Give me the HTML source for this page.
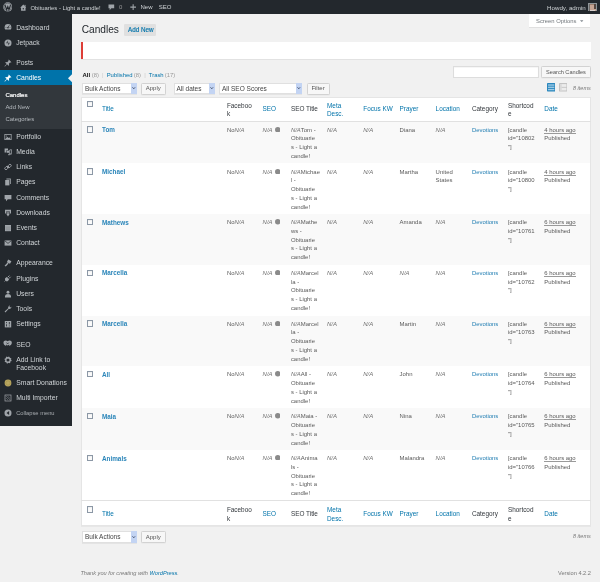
<!DOCTYPE html>
<html><head><meta charset="utf-8"><style>
html,body{margin:0;padding:0;width:600px;height:582px;overflow:hidden;background:#f1f1f1;font-family:"Liberation Sans", sans-serif;}
.t{position:absolute;white-space:nowrap;}
.r{position:absolute;}
i{font-style:italic;color:#6e6e6e;}
</style></head><body><div id="w" style="position:absolute;left:0;top:0;width:600px;height:582px;overflow:hidden;will-change:transform">
<div class="r" style="left:0.00px;top:0.00px;width:600.00px;height:14.00px;background:#23282d;"></div>
<div class="r" style="left:0.00px;top:14.00px;width:71.60px;height:411.90px;background:#23282d;"></div>
<svg class="r" style="left:2.90px;top:2.40px" width="9.6" height="9.8" viewBox="0 0 20 20"><circle cx="10" cy="10" r="9.6" fill="#a0a5aa"/><circle cx="10" cy="10" r="7.9" fill="none" stroke="#23282d" stroke-width="0.9"/><path d="M4.3 6.3 L7.6 15.8 L10 9.5 L12.4 15.8 L15.7 6.3" stroke="#23282d" stroke-width="2.3" fill="none"/></svg>
<svg class="r" style="left:19.90px;top:4.00px" width="6.6" height="7.0" viewBox="0 0 20 20"><path d="M10 1 L19.5 10.5 H16.8 V19.5 H3.2 V10.5 H0.5 Z" fill="#a0a5aa"/><rect x="14" y="2" width="2.8" height="5.5" fill="#a0a5aa"/><circle cx="10" cy="13.5" r="2.2" fill="#23282d"/></svg>
<div class="t" style="left:30.50px;top:4.54px;font-size:5.882px;line-height:7.65px;color:#d0d4d7;">Obituaries - Light a candle!</div>
<svg class="r" style="left:108.00px;top:4.20px" width="6.7" height="6.7" viewBox="0 0 20 20"><path d="M1.5 1.5 H18.5 V13 H10 L5 18.5 V13 H1.5 Z" fill="#a0a5aa"/></svg>
<div class="t" style="left:119.00px;top:4.42px;font-size:6.000px;line-height:7.8px;color:#999;">0</div>
<svg class="r" style="left:129.90px;top:4.10px" width="6.3" height="6.3" viewBox="0 0 20 20"><path d="M8.3 1 H11.7 V8.3 H19 V11.7 H11.7 V19 H8.3 V11.7 H1 V8.3 H8.3 Z" fill="#a0a5aa"/></svg>
<div class="t" style="left:140.50px;top:4.42px;font-size:6.000px;line-height:7.8px;color:#d0d4d7;">New</div>
<div class="t" style="left:158.80px;top:4.42px;font-size:6.000px;line-height:7.8px;color:#d0d4d7;">SEO</div>
<div class="t" style="left:547.00px;top:4.22px;font-size:6.196px;line-height:8.06px;color:#d0d4d7;">Howdy, admin</div>
<div class="r" style="left:587.90px;top:2.90px;width:9.00px;height:8.10px;background:#8f9598;"></div>
<div class="r" style="left:589.30px;top:3.60px;width:6.50px;height:7.00px;background:#c7a594;"></div>
<div class="r" style="left:593.80px;top:3.60px;width:2.00px;height:5.90px;background:#54453f;"></div>
<div class="r" style="left:589.30px;top:3.60px;width:1.10px;height:7.00px;background:#6e6a68;"></div>
<div class="r" style="left:590.40px;top:3.60px;width:4.10px;height:1.40px;background:#9b7d6c;"></div>
<div class="r" style="left:589.60px;top:9.80px;width:5.90px;height:0.80px;background:#d8d2cf;"></div>
<svg class="r" style="left:4.00px;top:23.45px" width="8" height="8" viewBox="0 0 20 20"><path d="M10 2.5 A8.5 8.5 0 0 0 1.5 11 A8.5 8.5 0 0 0 3.2 16.5 H16.8 A8.5 8.5 0 0 0 18.5 11 A8.5 8.5 0 0 0 10 2.5 Z" fill="#a0a5aa"/><path d="M9 12 L13.5 6" stroke="#23282d" stroke-width="1.8"/><circle cx="10" cy="12" r="1.8" fill="#23282d"/><rect x="4" y="10" width="2" height="1.5" fill="#23282d"/><rect x="14" y="10" width="2" height="1.5" fill="#23282d"/></svg>
<div class="t" style="left:16.20px;top:23.57px;font-size:6.800px;line-height:8.84px;color:#d0d4d7;">Dashboard</div>
<svg class="r" style="left:4.00px;top:38.75px" width="8" height="8" viewBox="0 0 20 20"><circle cx="10" cy="10" r="8.8" fill="#a0a5aa"/><path d="M9.2 3.5 V10.5 H5.5 Z M10.8 16.5 V9.5 H14.5 Z" fill="#23282d"/></svg>
<div class="t" style="left:16.20px;top:38.87px;font-size:6.800px;line-height:8.84px;color:#d0d4d7;">Jetpack</div>
<svg class="r" style="left:4.00px;top:59.00px" width="8" height="8" viewBox="0 0 20 20"><path d="M12 1.5 L18.5 8 L17 9.2 L15.6 8.3 L12 11.9 L12.8 15.4 L11.3 16.9 L7.7 13.3 L2.5 18.5 L1.5 18.5 L1.5 17.5 L6.7 12.3 L3.1 8.7 L4.6 7.2 L8.1 8 L11.7 4.4 L10.8 3 Z" fill="#a0a5aa"/></svg>
<div class="t" style="left:16.20px;top:59.12px;font-size:6.800px;line-height:8.84px;color:#d0d4d7;">Posts</div>
<svg class="r" style="left:4.00px;top:132.60px" width="8" height="8" viewBox="0 0 20 20"><rect x="1" y="2.5" width="18" height="15" fill="#a0a5aa"/><rect x="3" y="4.5" width="14" height="11" fill="#23282d"/><path d="M3.5 15 L8 9.5 L11 12.5 L13.5 10.5 L16.5 15 Z" fill="#a0a5aa"/><circle cx="6" cy="7.5" r="1.3" fill="#a0a5aa"/></svg>
<div class="t" style="left:16.20px;top:132.72px;font-size:6.800px;line-height:8.84px;color:#d0d4d7;">Portfolio</div>
<svg class="r" style="left:4.00px;top:147.80px" width="8" height="8" viewBox="0 0 20 20"><path d="M1.5 1.5 H10 V5.5 H6 V11 H1.5 Z" fill="#a0a5aa"/><path d="M7 6.5 H12.5 V12 H7 Z" fill="#a0a5aa"/><path d="M14 5 L18.5 4 V14.5 M14 5 V16" stroke="#a0a5aa" stroke-width="2" fill="none"/><circle cx="12.5" cy="16.5" r="2" fill="#a0a5aa"/><circle cx="17" cy="15" r="2" fill="#a0a5aa"/></svg>
<div class="t" style="left:16.20px;top:147.92px;font-size:6.800px;line-height:8.84px;color:#d0d4d7;">Media</div>
<svg class="r" style="left:4.00px;top:163.00px" width="8" height="8" viewBox="0 0 20 20"><g fill="none" stroke="#a0a5aa" stroke-width="2.3"><rect x="1.5" y="9.5" width="9.5" height="6" rx="3" transform="rotate(-45 6.25 12.5)"/><rect x="9" y="4.5" width="9.5" height="6" rx="3" transform="rotate(-45 13.75 7.5)"/><path d="M7.5 12.5 L12.5 7.5"/></g></svg>
<div class="t" style="left:16.20px;top:163.12px;font-size:6.800px;line-height:8.84px;color:#d0d4d7;">Links</div>
<svg class="r" style="left:4.00px;top:178.30px" width="8" height="8" viewBox="0 0 20 20"><path d="M6 1.5 H17 V15 H15 V3.5 H6 Z" fill="#a0a5aa"/><rect x="3" y="5" width="10.5" height="13.5" fill="#a0a5aa"/></svg>
<div class="t" style="left:16.20px;top:178.42px;font-size:6.800px;line-height:8.84px;color:#d0d4d7;">Pages</div>
<svg class="r" style="left:4.00px;top:193.50px" width="8" height="8" viewBox="0 0 20 20"><path d="M1.5 2.5 H18.5 V13 H9.5 L5 18 V13 H1.5 Z" fill="#a0a5aa"/></svg>
<div class="t" style="left:16.20px;top:193.62px;font-size:6.800px;line-height:8.84px;color:#d0d4d7;">Comments</div>
<svg class="r" style="left:4.00px;top:208.70px" width="8" height="8" viewBox="0 0 20 20"><path d="M2.5 2 H17.5 V11.5 H14 V5.5 H6 V11.5 H2.5 Z" fill="#a0a5aa"/><path d="M8.3 6.5 H11.7 V12 H14.5 L10 18.5 L5.5 12 H8.3 Z" fill="#a0a5aa"/></svg>
<div class="t" style="left:16.20px;top:208.82px;font-size:6.800px;line-height:8.84px;color:#d0d4d7;">Downloads</div>
<svg class="r" style="left:4.00px;top:223.90px" width="8" height="8" viewBox="0 0 20 20"><rect x="2.5" y="2.5" width="15" height="15.5" fill="#a0a5aa"/><path d="M2.5 7.5 H17.5 M7.5 7.5 V18 M12.5 7.5 V18 M2.5 12.7 H17.5" stroke="#23282d" stroke-width="0.6" opacity="0.5"/></svg>
<div class="t" style="left:16.20px;top:224.02px;font-size:6.800px;line-height:8.84px;color:#d0d4d7;">Events</div>
<svg class="r" style="left:4.00px;top:239.20px" width="8" height="8" viewBox="0 0 20 20"><rect x="1.5" y="3.5" width="17" height="13" fill="#a0a5aa"/><path d="M1.5 4 L10 11 L18.5 4" stroke="#23282d" stroke-width="1.8" fill="none"/></svg>
<div class="t" style="left:16.20px;top:239.32px;font-size:6.800px;line-height:8.84px;color:#d0d4d7;">Contact</div>
<svg class="r" style="left:4.00px;top:259.20px" width="8" height="8" viewBox="0 0 20 20"><path d="M10.5 1.5 L18.5 5.5 L15 12 L7 8 Z" fill="#a0a5aa"/><path d="M8.5 9.5 L11.5 11 L4.5 18.5 L1.5 17 Z" fill="#a0a5aa"/></svg>
<div class="t" style="left:16.20px;top:259.32px;font-size:6.800px;line-height:8.84px;color:#d0d4d7;">Appearance</div>
<svg class="r" style="left:4.00px;top:274.40px" width="8" height="8" viewBox="0 0 20 20"><path d="M6.5 7.5 L13 14 L9 18 L5 18 L2.5 15.5 L2.5 11.5 Z" fill="#a0a5aa"/><path d="M9 8.5 L13.5 4 M12 11.5 L16.5 7" stroke="#a0a5aa" stroke-width="2.4"/><path d="M3.5 16.5 L1 19" stroke="#a0a5aa" stroke-width="1.6"/></svg>
<div class="t" style="left:16.20px;top:274.52px;font-size:6.800px;line-height:8.84px;color:#d0d4d7;">Plugins</div>
<svg class="r" style="left:4.00px;top:289.60px" width="8" height="8" viewBox="0 0 20 20"><circle cx="10" cy="5.5" r="3.6" fill="#a0a5aa"/><path d="M2.5 18.5 V14.5 Q3.5 10 10 10 Q16.5 10 17.5 14.5 V18.5 Z" fill="#a0a5aa"/></svg>
<div class="t" style="left:16.20px;top:289.72px;font-size:6.800px;line-height:8.84px;color:#d0d4d7;">Users</div>
<svg class="r" style="left:4.00px;top:304.80px" width="8" height="8" viewBox="0 0 20 20"><path d="M15.5 1.5 A5 5 0 0 0 10.5 8 L1.5 16.5 L3.5 18.5 L12 9.5 A5 5 0 0 0 18.5 4.5 L15.5 6.5 L13.5 4.5 Z" fill="#a0a5aa"/></svg>
<div class="t" style="left:16.20px;top:304.92px;font-size:6.800px;line-height:8.84px;color:#d0d4d7;">Tools</div>
<svg class="r" style="left:4.00px;top:320.00px" width="8" height="8" viewBox="0 0 20 20"><rect x="2" y="2.5" width="16" height="16" fill="#a0a5aa"/><rect x="5.2" y="5" width="2" height="11" fill="#23282d"/><rect x="12.2" y="5" width="2" height="11" fill="#23282d"/><rect x="3.8" y="8" width="4.8" height="2.6" fill="#a0a5aa"/><rect x="10.8" y="11" width="4.8" height="2.6" fill="#a0a5aa"/></svg>
<div class="t" style="left:16.20px;top:320.12px;font-size:6.800px;line-height:8.84px;color:#d0d4d7;">Settings</div>
<svg class="r" style="left:3.40px;top:340.40px" width="9.3" height="7.0" viewBox="0 0 20 15"><path d="M10 2.5 C7 0 1 0.5 1 6 C1 10.5 4.5 12 7 13 L6.5 9.5 L10 12 L13.5 9.5 L13 13 C15.5 12 19 10.5 19 6 C19 0.5 13 0 10 2.5 Z" fill="#a0a5aa"/><path d="M7.5 5.5 L10 8.5 L12.5 5.5" stroke="#23282d" stroke-width="1.6" fill="none"/></svg>
<div class="t" style="left:16.20px;top:340.72px;font-size:6.800px;line-height:8.84px;color:#d0d4d7;">SEO</div>
<svg class="r" style="left:4.00px;top:378.50px" width="8" height="8" viewBox="0 0 20 20"><circle cx="10" cy="10" r="8.5" fill="#b9a75f"/><circle cx="10" cy="10" r="5.5" fill="none" stroke="#9c8b4a" stroke-width="1.2"/></svg>
<div class="t" style="left:16.20px;top:378.62px;font-size:6.800px;line-height:8.84px;color:#d0d4d7;">Smart Donations</div>
<svg class="r" style="left:4.00px;top:393.70px" width="8" height="8" viewBox="0 0 20 20"><rect x="2.5" y="2.5" width="15" height="15" fill="none" stroke="#a0a5aa" stroke-width="1.8"/><path d="M5 5 L15 15 M5 10 L10 15 M9 5 L15 11" stroke="#a0a5aa" stroke-width="1.3" opacity="0.8"/></svg>
<div class="t" style="left:16.20px;top:393.82px;font-size:6.800px;line-height:8.84px;color:#d0d4d7;">Multi Importer</div>
<svg class="r" style="left:4.00px;top:355.80px" width="8" height="8" viewBox="0 0 20 20"><circle cx="10" cy="10" r="6.8" fill="none" stroke="#a0a5aa" stroke-width="4.2" stroke-dasharray="2.6 2.74"/><circle cx="10" cy="10" r="5.6" fill="none" stroke="#a0a5aa" stroke-width="3.2"/></svg>
<div class="t" style="left:16.20px;top:355.72px;font-size:6.800px;line-height:8.84px;color:#d0d4d7;">Add Link to</div>
<div class="t" style="left:16.20px;top:364.32px;font-size:6.800px;line-height:8.84px;color:#d0d4d7;">Facebook</div>
<svg class="r" style="left:4.00px;top:409.30px" width="8" height="8" viewBox="0 0 20 20"><circle cx="10" cy="10" r="8.8" fill="#a0a5aa"/><path d="M12.8 5 L6.2 10 L12.8 15 Z" fill="#23282d"/></svg>
<div class="t" style="left:16.20px;top:410.17px;font-size:5.750px;line-height:7.48px;color:#a8acb0;">Collapse menu</div>
<div class="r" style="left:0.00px;top:69.90px;width:71.60px;height:15.40px;background:#0073aa;"></div>
<svg class="r" style="left:4.00px;top:74.20px" width="8" height="8" viewBox="0 0 20 20"><path d="M12 1.5 L18.5 8 L17 9.2 L15.6 8.3 L12 11.9 L12.8 15.4 L11.3 16.9 L7.7 13.3 L2.5 18.5 L1.5 18.5 L1.5 17.5 L6.7 12.3 L3.1 8.7 L4.6 7.2 L8.1 8 L11.7 4.4 L10.8 3 Z" fill="#ffffff"/></svg>
<div class="t" style="left:16.20px;top:74.12px;font-size:6.800px;line-height:8.84px;color:#fff;">Candles</div>
<svg class="r" style="left:67.60px;top:73.60px" width="4.0" height="8.4" viewBox="0 0 4 8"><path d="M4 0 L0 4 L4 8 Z" fill="#f1f1f1"/></svg>
<div class="r" style="left:0.00px;top:85.30px;width:71.60px;height:43.50px;background:#32373c;"></div>
<div class="t" style="left:5.40px;top:91.62px;font-size:6.000px;line-height:7.8px;color:#fff;-webkit-text-stroke:0.18px #fff;">Candles</div>
<div class="t" style="left:5.40px;top:103.67px;font-size:5.950px;line-height:7.74px;color:#b4b9be;">Add New</div>
<div class="t" style="left:5.40px;top:116.07px;font-size:5.950px;line-height:7.74px;color:#b4b9be;">Categories</div>
<div class="r" style="left:528.90px;top:14.00px;width:61.40px;height:13.20px;background:#fff;box-shadow:0 0.5px 0.5px rgba(0,0,0,0.07)"></div>
<div class="t" style="left:536.00px;top:17.56px;font-size:5.861px;line-height:7.62px;color:#72777c;">Screen Options</div>
<svg class="r" style="left:580.40px;top:19.60px" width="3.4" height="2.6" viewBox="0 0 4 3"><path d="M0 0 H4 L2 3 Z" fill="#a0a5aa"/></svg>
<div class="t" style="left:81.70px;top:23.27px;font-size:10.166px;line-height:13.22px;color:#23282d;">Candles</div>
<div class="r" style="left:124.00px;top:24.00px;width:32.00px;height:11.50px;background:#e0e0e0;border-radius:1px"></div>
<div class="t" style="left:128.00px;top:26.32px;font-size:6.300px;line-height:8.19px;color:#0073aa;-webkit-text-stroke:0.15px #0073aa;">Add New</div>
<div class="r" style="left:81.00px;top:41.60px;width:510.00px;height:17.30px;background:#fff;box-shadow:0 0.5px 0.5px rgba(0,0,0,0.06)"></div>
<div class="r" style="left:81.00px;top:41.60px;width:1.80px;height:17.30px;background:#dd3d36;"></div>
<div class="t" style="left:82.50px;top:71.62px;font-size:6.000px;line-height:7.8px;color:#111;font-weight:bold;">All</div>
<div class="t" style="left:91.70px;top:71.72px;font-size:5.900px;line-height:7.67px;color:#999;">(8)</div>
<div class="t" style="left:101.90px;top:71.62px;font-size:6.000px;line-height:7.8px;color:#ccc;">|</div>
<div class="t" style="left:106.70px;top:71.72px;font-size:5.900px;line-height:7.67px;color:#0073aa;">Published</div>
<div class="t" style="left:133.70px;top:71.72px;font-size:5.900px;line-height:7.67px;color:#999;">(8)</div>
<div class="t" style="left:144.20px;top:71.62px;font-size:6.000px;line-height:7.8px;color:#ccc;">|</div>
<div class="t" style="left:148.80px;top:71.72px;font-size:5.900px;line-height:7.67px;color:#0073aa;">Trash</div>
<div class="t" style="left:164.70px;top:71.72px;font-size:5.900px;line-height:7.67px;color:#999;">(17)</div>
<div class="r" style="left:453.30px;top:65.60px;width:85.90px;height:12.40px;background:#fff;border:0.5px solid #dddddd;box-sizing:border-box;box-shadow:inset 0 0.5px 1px rgba(0,0,0,.07)"></div>
<div class="r" style="left:541.30px;top:65.70px;width:49.40px;height:12.30px;background:#f7f7f7;border:0.5px solid #d2d2d2;box-sizing:border-box;border-radius:1.3px;box-shadow:0 0.5px 0 rgba(0,0,0,.05)"></div>
<div class="t" style="left:506.00px;width:120px;text-align:center;top:68.71px;font-size:5.608px;line-height:7.29px;color:#555;">Search Candles</div>
<div class="r" style="left:82.00px;top:82.80px;width:55.00px;height:11.40px;background:#fff;border:0.5px solid #e0e0e0;box-sizing:border-box;box-shadow:0 0.5px 0.5px rgba(0,0,0,.05)"></div>
<div class="r" style="left:130.50px;top:83.30px;width:6.20px;height:10.40px;background:#c3d4f3;"></div>
<svg class="r" style="left:132.00px;top:87.30px" width="3.6" height="2.6" viewBox="0 0 4 3"><path d="M0.6 0.5 L2 1.9 L3.4 0.5" stroke="#2f3d58" stroke-width="1.1" fill="none"/></svg>
<div class="t" style="left:85.00px;top:84.72px;font-size:6.500px;line-height:8.45px;color:#444;">Bulk Actions</div>
<div class="r" style="left:141.00px;top:82.50px;width:24.50px;height:12.00px;background:#f7f7f7;border:0.5px solid #d2d2d2;box-sizing:border-box;border-radius:1.3px;box-shadow:0 0.5px 0 rgba(0,0,0,.05)"></div>
<div class="t" style="left:93.25px;width:120px;text-align:center;top:84.92px;font-size:6.000px;line-height:7.8px;color:#555;">Apply</div>
<div class="r" style="left:173.50px;top:82.60px;width:41.50px;height:11.80px;background:#fff;border:0.5px solid #e0e0e0;box-sizing:border-box;box-shadow:0 0.5px 0.5px rgba(0,0,0,.05)"></div>
<div class="r" style="left:208.50px;top:83.10px;width:6.20px;height:10.80px;background:#c3d4f3;"></div>
<svg class="r" style="left:210.00px;top:87.30px" width="3.6" height="2.6" viewBox="0 0 4 3"><path d="M0.6 0.5 L2 1.9 L3.4 0.5" stroke="#2f3d58" stroke-width="1.1" fill="none"/></svg>
<div class="t" style="left:176.50px;top:84.72px;font-size:6.500px;line-height:8.45px;color:#444;">All dates</div>
<div class="r" style="left:219.00px;top:82.60px;width:83.00px;height:11.80px;background:#fff;border:0.5px solid #e0e0e0;box-sizing:border-box;box-shadow:0 0.5px 0.5px rgba(0,0,0,.05)"></div>
<div class="r" style="left:295.50px;top:83.10px;width:6.20px;height:10.80px;background:#c3d4f3;"></div>
<svg class="r" style="left:297.00px;top:87.30px" width="3.6" height="2.6" viewBox="0 0 4 3"><path d="M0.6 0.5 L2 1.9 L3.4 0.5" stroke="#2f3d58" stroke-width="1.1" fill="none"/></svg>
<div class="t" style="left:222.00px;top:84.72px;font-size:6.500px;line-height:8.45px;color:#444;">All SEO Scores</div>
<div class="r" style="left:306.50px;top:82.50px;width:23.10px;height:12.00px;background:#f7f7f7;border:0.5px solid #d2d2d2;box-sizing:border-box;border-radius:1.3px;box-shadow:0 0.5px 0 rgba(0,0,0,.05)"></div>
<div class="t" style="left:258.05px;width:120px;text-align:center;top:84.92px;font-size:6.000px;line-height:7.8px;color:#555;">Filter</div>
<svg class="r" style="left:546.80px;top:83.20px" width="8.4" height="8.6" viewBox="0 0 20 20"><rect x="0" y="0" width="20" height="20" rx="1.5" fill="#2b87bd"/><rect x="2.5" y="3" width="15" height="3.2" fill="#9fcbe6"/><rect x="2.5" y="8.4" width="15" height="3.2" fill="#9fcbe6"/><rect x="2.5" y="13.8" width="15" height="3.2" fill="#9fcbe6"/></svg>
<svg class="r" style="left:558.50px;top:83.20px" width="8.5" height="8.6" viewBox="0 0 20 20"><rect x="0" y="0" width="20" height="20" rx="1.5" fill="#c3c3c3"/><rect x="2.5" y="2.5" width="15" height="6.5" fill="#ececec"/><rect x="2.5" y="11" width="15" height="6.5" fill="#ececec"/><rect x="2.5" y="2.5" width="4" height="15" fill="#d9d9d9"/></svg>
<div class="t" style="left:573.00px;top:84.52px;font-size:5.500px;line-height:7.15px;color:#777;font-style:italic;">8 items</div>
<div class="r" style="left:81.30px;top:96.50px;width:509.30px;height:429.00px;background:#fff;border:0.5px solid #e5e5e5;box-sizing:border-box;box-shadow:0 0.5px 0.5px rgba(0,0,0,.04)"></div>
<div class="r" style="left:81.80px;top:121.40px;width:508.30px;height:42.00px;background:#f9f9f9;"></div>
<div class="r" style="left:81.80px;top:213.90px;width:508.30px;height:50.70px;background:#f9f9f9;"></div>
<div class="r" style="left:81.80px;top:315.50px;width:508.30px;height:50.70px;background:#f9f9f9;"></div>
<div class="r" style="left:81.80px;top:408.20px;width:508.30px;height:41.60px;background:#f9f9f9;"></div>
<div class="r" style="left:81.30px;top:120.90px;width:509.30px;height:0.60px;background:#e1e1e1;"></div>
<div class="r" style="left:81.30px;top:500.40px;width:509.30px;height:0.60px;background:#e1e1e1;"></div>
<div class="r" style="left:87.00px;top:100.90px;width:6.20px;height:6.30px;background:#fbfbfb;border:0.7px solid #8c98a6;box-sizing:border-box;box-shadow:inset 0 0.5px 1px rgba(0,0,0,.08)"></div>
<div class="t" style="left:102.00px;top:105.22px;font-size:6.400px;line-height:8.32px;color:#0073aa;">Title</div>
<div class="t" style="left:226.90px;top:101.52px;font-size:6.400px;line-height:8.32px;color:#32373c;">Faceboo</div>
<div class="t" style="left:226.90px;top:109.92px;font-size:6.400px;line-height:8.32px;color:#32373c;">k</div>
<div class="t" style="left:262.60px;top:105.22px;font-size:6.400px;line-height:8.32px;color:#0073aa;">SEO</div>
<div class="t" style="left:290.90px;top:105.22px;font-size:6.400px;line-height:8.32px;color:#32373c;">SEO Title</div>
<div class="t" style="left:327.00px;top:101.52px;font-size:6.400px;line-height:8.32px;color:#0073aa;">Meta</div>
<div class="t" style="left:327.00px;top:109.92px;font-size:6.400px;line-height:8.32px;color:#0073aa;">Desc.</div>
<div class="t" style="left:363.30px;top:105.22px;font-size:6.400px;line-height:8.32px;color:#0073aa;">Focus KW</div>
<div class="t" style="left:399.60px;top:105.22px;font-size:6.400px;line-height:8.32px;color:#0073aa;">Prayer</div>
<div class="t" style="left:435.60px;top:105.22px;font-size:6.400px;line-height:8.32px;color:#0073aa;">Location</div>
<div class="t" style="left:471.90px;top:105.22px;font-size:6.400px;line-height:8.32px;color:#32373c;">Category</div>
<div class="t" style="left:507.90px;top:101.52px;font-size:6.400px;line-height:8.32px;color:#32373c;">Shortcod</div>
<div class="t" style="left:507.90px;top:109.92px;font-size:6.400px;line-height:8.32px;color:#32373c;">e</div>
<div class="t" style="left:544.30px;top:105.22px;font-size:6.400px;line-height:8.32px;color:#0073aa;">Date</div>
<div class="r" style="left:87.00px;top:506.40px;width:6.20px;height:6.30px;background:#fbfbfb;border:0.7px solid #8c98a6;box-sizing:border-box;box-shadow:inset 0 0.5px 1px rgba(0,0,0,.08)"></div>
<div class="t" style="left:102.00px;top:510.22px;font-size:6.400px;line-height:8.32px;color:#0073aa;">Title</div>
<div class="t" style="left:226.90px;top:506.32px;font-size:6.400px;line-height:8.32px;color:#32373c;">Faceboo</div>
<div class="t" style="left:226.90px;top:514.52px;font-size:6.400px;line-height:8.32px;color:#32373c;">k</div>
<div class="t" style="left:262.60px;top:510.22px;font-size:6.400px;line-height:8.32px;color:#0073aa;">SEO</div>
<div class="t" style="left:290.90px;top:510.22px;font-size:6.400px;line-height:8.32px;color:#32373c;">SEO Title</div>
<div class="t" style="left:327.00px;top:506.32px;font-size:6.400px;line-height:8.32px;color:#0073aa;">Meta</div>
<div class="t" style="left:327.00px;top:514.52px;font-size:6.400px;line-height:8.32px;color:#0073aa;">Desc.</div>
<div class="t" style="left:363.30px;top:510.22px;font-size:6.400px;line-height:8.32px;color:#0073aa;">Focus KW</div>
<div class="t" style="left:399.60px;top:510.22px;font-size:6.400px;line-height:8.32px;color:#0073aa;">Prayer</div>
<div class="t" style="left:435.60px;top:510.22px;font-size:6.400px;line-height:8.32px;color:#0073aa;">Location</div>
<div class="t" style="left:471.90px;top:510.22px;font-size:6.400px;line-height:8.32px;color:#32373c;">Category</div>
<div class="t" style="left:507.90px;top:506.32px;font-size:6.400px;line-height:8.32px;color:#32373c;">Shortcod</div>
<div class="t" style="left:507.90px;top:514.52px;font-size:6.400px;line-height:8.32px;color:#32373c;">e</div>
<div class="t" style="left:544.30px;top:510.22px;font-size:6.400px;line-height:8.32px;color:#0073aa;">Date</div>
<div class="r" style="left:87.00px;top:126.30px;width:6.20px;height:6.30px;background:#fbfbfb;border:0.7px solid #8c98a6;box-sizing:border-box;box-shadow:inset 0 0.5px 1px rgba(0,0,0,.08)"></div>
<div class="t" style="left:102.00px;top:126.17px;font-size:6.350px;line-height:8.25px;color:#2a85b9;font-weight:bold;">Tom</div>
<div class="t" style="left:226.90px;top:126.57px;font-size:5.950px;line-height:7.74px;color:#5a5a5a;">No<i>N/A</i></div>
<div class="t" style="left:262.60px;top:126.57px;font-size:5.950px;line-height:7.74px;color:#5a5a5a;"><i>N/A</i></div>
<svg class="r" style="left:274.90px;top:126.50px" width="5.5" height="5.5" viewBox="0 0 20 20"><circle cx="10" cy="10" r="10" fill="#8a8a8a"/></svg>
<div class="t" style="left:290.90px;top:126.57px;font-size:5.950px;line-height:7.74px;color:#5a5a5a;"><i>N/A</i>Tom -</div>
<div class="t" style="left:290.90px;top:135.37px;font-size:5.950px;line-height:7.74px;color:#5a5a5a;">Obituarie</div>
<div class="t" style="left:290.90px;top:144.17px;font-size:5.950px;line-height:7.74px;color:#5a5a5a;">s - Light a</div>
<div class="t" style="left:290.90px;top:152.97px;font-size:5.950px;line-height:7.74px;color:#5a5a5a;">candle!</div>
<div class="t" style="left:327.00px;top:126.57px;font-size:5.950px;line-height:7.74px;color:#5a5a5a;"><i>N/A</i></div>
<div class="t" style="left:363.30px;top:126.57px;font-size:5.950px;line-height:7.74px;color:#5a5a5a;"><i>N/A</i></div>
<div class="t" style="left:399.60px;top:126.57px;font-size:5.950px;line-height:7.74px;color:#5a5a5a;">Diana</div>
<div class="t" style="left:435.60px;top:126.57px;font-size:5.950px;line-height:7.74px;color:#5a5a5a;"><i>N/A</i></div>
<div class="t" style="left:471.90px;top:126.57px;font-size:5.950px;line-height:7.74px;color:#1f7db2;">Devotions</div>
<div class="t" style="left:507.90px;top:126.57px;font-size:5.950px;line-height:7.74px;color:#5a5a5a;">[candle</div>
<div class="t" style="left:507.90px;top:135.37px;font-size:5.950px;line-height:7.74px;color:#5a5a5a;">id="10802</div>
<div class="t" style="left:507.90px;top:144.17px;font-size:5.950px;line-height:7.74px;color:#5a5a5a;">"]</div>
<div class="t" style="left:544.30px;top:126.57px;font-size:5.950px;line-height:7.74px;color:#5a5a5a;"><span style="border-bottom:0.5px solid #9a9a9a">4 hours ago</span></div>
<div class="t" style="left:544.30px;top:135.37px;font-size:5.950px;line-height:7.74px;color:#5a5a5a;">Published</div>
<div class="r" style="left:87.00px;top:168.30px;width:6.20px;height:6.30px;background:#fbfbfb;border:0.7px solid #8c98a6;box-sizing:border-box;box-shadow:inset 0 0.5px 1px rgba(0,0,0,.08)"></div>
<div class="t" style="left:102.00px;top:168.17px;font-size:6.350px;line-height:8.25px;color:#2a85b9;font-weight:bold;">Michael</div>
<div class="t" style="left:226.90px;top:168.57px;font-size:5.950px;line-height:7.74px;color:#5a5a5a;">No<i>N/A</i></div>
<div class="t" style="left:262.60px;top:168.57px;font-size:5.950px;line-height:7.74px;color:#5a5a5a;"><i>N/A</i></div>
<svg class="r" style="left:274.90px;top:168.50px" width="5.5" height="5.5" viewBox="0 0 20 20"><circle cx="10" cy="10" r="10" fill="#8a8a8a"/></svg>
<div class="t" style="left:290.90px;top:168.57px;font-size:5.950px;line-height:7.74px;color:#5a5a5a;"><i>N/A</i>Michae</div>
<div class="t" style="left:290.90px;top:177.37px;font-size:5.950px;line-height:7.74px;color:#5a5a5a;">l -</div>
<div class="t" style="left:290.90px;top:186.17px;font-size:5.950px;line-height:7.74px;color:#5a5a5a;">Obituarie</div>
<div class="t" style="left:290.90px;top:194.97px;font-size:5.950px;line-height:7.74px;color:#5a5a5a;">s - Light a</div>
<div class="t" style="left:290.90px;top:203.77px;font-size:5.950px;line-height:7.74px;color:#5a5a5a;">candle!</div>
<div class="t" style="left:327.00px;top:168.57px;font-size:5.950px;line-height:7.74px;color:#5a5a5a;"><i>N/A</i></div>
<div class="t" style="left:363.30px;top:168.57px;font-size:5.950px;line-height:7.74px;color:#5a5a5a;"><i>N/A</i></div>
<div class="t" style="left:399.60px;top:168.57px;font-size:5.950px;line-height:7.74px;color:#5a5a5a;">Martha</div>
<div class="t" style="left:435.60px;top:168.57px;font-size:5.950px;line-height:7.74px;color:#5a5a5a;">United</div>
<div class="t" style="left:435.60px;top:177.37px;font-size:5.950px;line-height:7.74px;color:#5a5a5a;">States</div>
<div class="t" style="left:471.90px;top:168.57px;font-size:5.950px;line-height:7.74px;color:#1f7db2;">Devotions</div>
<div class="t" style="left:507.90px;top:168.57px;font-size:5.950px;line-height:7.74px;color:#5a5a5a;">[candle</div>
<div class="t" style="left:507.90px;top:177.37px;font-size:5.950px;line-height:7.74px;color:#5a5a5a;">id="10800</div>
<div class="t" style="left:507.90px;top:186.17px;font-size:5.950px;line-height:7.74px;color:#5a5a5a;">"]</div>
<div class="t" style="left:544.30px;top:168.57px;font-size:5.950px;line-height:7.74px;color:#5a5a5a;"><span style="border-bottom:0.5px solid #9a9a9a">4 hours ago</span></div>
<div class="t" style="left:544.30px;top:177.37px;font-size:5.950px;line-height:7.74px;color:#5a5a5a;">Published</div>
<div class="r" style="left:87.00px;top:218.80px;width:6.20px;height:6.30px;background:#fbfbfb;border:0.7px solid #8c98a6;box-sizing:border-box;box-shadow:inset 0 0.5px 1px rgba(0,0,0,.08)"></div>
<div class="t" style="left:102.00px;top:218.67px;font-size:6.350px;line-height:8.25px;color:#2a85b9;font-weight:bold;">Mathews</div>
<div class="t" style="left:226.90px;top:219.07px;font-size:5.950px;line-height:7.74px;color:#5a5a5a;">No<i>N/A</i></div>
<div class="t" style="left:262.60px;top:219.07px;font-size:5.950px;line-height:7.74px;color:#5a5a5a;"><i>N/A</i></div>
<svg class="r" style="left:274.90px;top:219.00px" width="5.5" height="5.5" viewBox="0 0 20 20"><circle cx="10" cy="10" r="10" fill="#8a8a8a"/></svg>
<div class="t" style="left:290.90px;top:219.07px;font-size:5.950px;line-height:7.74px;color:#5a5a5a;"><i>N/A</i>Mathe</div>
<div class="t" style="left:290.90px;top:227.87px;font-size:5.950px;line-height:7.74px;color:#5a5a5a;">ws -</div>
<div class="t" style="left:290.90px;top:236.67px;font-size:5.950px;line-height:7.74px;color:#5a5a5a;">Obituarie</div>
<div class="t" style="left:290.90px;top:245.47px;font-size:5.950px;line-height:7.74px;color:#5a5a5a;">s - Light a</div>
<div class="t" style="left:290.90px;top:254.27px;font-size:5.950px;line-height:7.74px;color:#5a5a5a;">candle!</div>
<div class="t" style="left:327.00px;top:219.07px;font-size:5.950px;line-height:7.74px;color:#5a5a5a;"><i>N/A</i></div>
<div class="t" style="left:363.30px;top:219.07px;font-size:5.950px;line-height:7.74px;color:#5a5a5a;"><i>N/A</i></div>
<div class="t" style="left:399.60px;top:219.07px;font-size:5.950px;line-height:7.74px;color:#5a5a5a;">Amanda</div>
<div class="t" style="left:435.60px;top:219.07px;font-size:5.950px;line-height:7.74px;color:#5a5a5a;"><i>N/A</i></div>
<div class="t" style="left:471.90px;top:219.07px;font-size:5.950px;line-height:7.74px;color:#1f7db2;">Devotions</div>
<div class="t" style="left:507.90px;top:219.07px;font-size:5.950px;line-height:7.74px;color:#5a5a5a;">[candle</div>
<div class="t" style="left:507.90px;top:227.87px;font-size:5.950px;line-height:7.74px;color:#5a5a5a;">id="10761</div>
<div class="t" style="left:507.90px;top:236.67px;font-size:5.950px;line-height:7.74px;color:#5a5a5a;">"]</div>
<div class="t" style="left:544.30px;top:219.07px;font-size:5.950px;line-height:7.74px;color:#5a5a5a;"><span style="border-bottom:0.5px solid #9a9a9a">6 hours ago</span></div>
<div class="t" style="left:544.30px;top:227.87px;font-size:5.950px;line-height:7.74px;color:#5a5a5a;">Published</div>
<div class="r" style="left:87.00px;top:269.50px;width:6.20px;height:6.30px;background:#fbfbfb;border:0.7px solid #8c98a6;box-sizing:border-box;box-shadow:inset 0 0.5px 1px rgba(0,0,0,.08)"></div>
<div class="t" style="left:102.00px;top:269.37px;font-size:6.350px;line-height:8.25px;color:#2a85b9;font-weight:bold;">Marcella</div>
<div class="t" style="left:226.90px;top:269.77px;font-size:5.950px;line-height:7.74px;color:#5a5a5a;">No<i>N/A</i></div>
<div class="t" style="left:262.60px;top:269.77px;font-size:5.950px;line-height:7.74px;color:#5a5a5a;"><i>N/A</i></div>
<svg class="r" style="left:274.90px;top:269.70px" width="5.5" height="5.5" viewBox="0 0 20 20"><circle cx="10" cy="10" r="10" fill="#8a8a8a"/></svg>
<div class="t" style="left:290.90px;top:269.77px;font-size:5.950px;line-height:7.74px;color:#5a5a5a;"><i>N/A</i>Marcel</div>
<div class="t" style="left:290.90px;top:278.57px;font-size:5.950px;line-height:7.74px;color:#5a5a5a;">la -</div>
<div class="t" style="left:290.90px;top:287.37px;font-size:5.950px;line-height:7.74px;color:#5a5a5a;">Obituarie</div>
<div class="t" style="left:290.90px;top:296.17px;font-size:5.950px;line-height:7.74px;color:#5a5a5a;">s - Light a</div>
<div class="t" style="left:290.90px;top:304.97px;font-size:5.950px;line-height:7.74px;color:#5a5a5a;">candle!</div>
<div class="t" style="left:327.00px;top:269.77px;font-size:5.950px;line-height:7.74px;color:#5a5a5a;"><i>N/A</i></div>
<div class="t" style="left:363.30px;top:269.77px;font-size:5.950px;line-height:7.74px;color:#5a5a5a;"><i>N/A</i></div>
<div class="t" style="left:399.60px;top:269.77px;font-size:5.950px;line-height:7.74px;color:#5a5a5a;"><i>N/A</i></div>
<div class="t" style="left:435.60px;top:269.77px;font-size:5.950px;line-height:7.74px;color:#5a5a5a;"><i>N/A</i></div>
<div class="t" style="left:471.90px;top:269.77px;font-size:5.950px;line-height:7.74px;color:#1f7db2;">Devotions</div>
<div class="t" style="left:507.90px;top:269.77px;font-size:5.950px;line-height:7.74px;color:#5a5a5a;">[candle</div>
<div class="t" style="left:507.90px;top:278.57px;font-size:5.950px;line-height:7.74px;color:#5a5a5a;">id="10762</div>
<div class="t" style="left:507.90px;top:287.37px;font-size:5.950px;line-height:7.74px;color:#5a5a5a;">"]</div>
<div class="t" style="left:544.30px;top:269.77px;font-size:5.950px;line-height:7.74px;color:#5a5a5a;"><span style="border-bottom:0.5px solid #9a9a9a">6 hours ago</span></div>
<div class="t" style="left:544.30px;top:278.57px;font-size:5.950px;line-height:7.74px;color:#5a5a5a;">Published</div>
<div class="r" style="left:87.00px;top:320.40px;width:6.20px;height:6.30px;background:#fbfbfb;border:0.7px solid #8c98a6;box-sizing:border-box;box-shadow:inset 0 0.5px 1px rgba(0,0,0,.08)"></div>
<div class="t" style="left:102.00px;top:320.27px;font-size:6.350px;line-height:8.25px;color:#2a85b9;font-weight:bold;">Marcella</div>
<div class="t" style="left:226.90px;top:320.67px;font-size:5.950px;line-height:7.74px;color:#5a5a5a;">No<i>N/A</i></div>
<div class="t" style="left:262.60px;top:320.67px;font-size:5.950px;line-height:7.74px;color:#5a5a5a;"><i>N/A</i></div>
<svg class="r" style="left:274.90px;top:320.60px" width="5.5" height="5.5" viewBox="0 0 20 20"><circle cx="10" cy="10" r="10" fill="#8a8a8a"/></svg>
<div class="t" style="left:290.90px;top:320.67px;font-size:5.950px;line-height:7.74px;color:#5a5a5a;"><i>N/A</i>Marcel</div>
<div class="t" style="left:290.90px;top:329.47px;font-size:5.950px;line-height:7.74px;color:#5a5a5a;">la -</div>
<div class="t" style="left:290.90px;top:338.27px;font-size:5.950px;line-height:7.74px;color:#5a5a5a;">Obituarie</div>
<div class="t" style="left:290.90px;top:347.07px;font-size:5.950px;line-height:7.74px;color:#5a5a5a;">s - Light a</div>
<div class="t" style="left:290.90px;top:355.87px;font-size:5.950px;line-height:7.74px;color:#5a5a5a;">candle!</div>
<div class="t" style="left:327.00px;top:320.67px;font-size:5.950px;line-height:7.74px;color:#5a5a5a;"><i>N/A</i></div>
<div class="t" style="left:363.30px;top:320.67px;font-size:5.950px;line-height:7.74px;color:#5a5a5a;"><i>N/A</i></div>
<div class="t" style="left:399.60px;top:320.67px;font-size:5.950px;line-height:7.74px;color:#5a5a5a;">Martin</div>
<div class="t" style="left:435.60px;top:320.67px;font-size:5.950px;line-height:7.74px;color:#5a5a5a;"><i>N/A</i></div>
<div class="t" style="left:471.90px;top:320.67px;font-size:5.950px;line-height:7.74px;color:#1f7db2;">Devotions</div>
<div class="t" style="left:507.90px;top:320.67px;font-size:5.950px;line-height:7.74px;color:#5a5a5a;">[candle</div>
<div class="t" style="left:507.90px;top:329.47px;font-size:5.950px;line-height:7.74px;color:#5a5a5a;">id="10763</div>
<div class="t" style="left:507.90px;top:338.27px;font-size:5.950px;line-height:7.74px;color:#5a5a5a;">"]</div>
<div class="t" style="left:544.30px;top:320.67px;font-size:5.950px;line-height:7.74px;color:#5a5a5a;"><span style="border-bottom:0.5px solid #9a9a9a">6 hours ago</span></div>
<div class="t" style="left:544.30px;top:329.47px;font-size:5.950px;line-height:7.74px;color:#5a5a5a;">Published</div>
<div class="r" style="left:87.00px;top:371.10px;width:6.20px;height:6.30px;background:#fbfbfb;border:0.7px solid #8c98a6;box-sizing:border-box;box-shadow:inset 0 0.5px 1px rgba(0,0,0,.08)"></div>
<div class="t" style="left:102.00px;top:370.97px;font-size:6.350px;line-height:8.25px;color:#2a85b9;font-weight:bold;">All</div>
<div class="t" style="left:226.90px;top:371.37px;font-size:5.950px;line-height:7.74px;color:#5a5a5a;">No<i>N/A</i></div>
<div class="t" style="left:262.60px;top:371.37px;font-size:5.950px;line-height:7.74px;color:#5a5a5a;"><i>N/A</i></div>
<svg class="r" style="left:274.90px;top:371.30px" width="5.5" height="5.5" viewBox="0 0 20 20"><circle cx="10" cy="10" r="10" fill="#8a8a8a"/></svg>
<div class="t" style="left:290.90px;top:371.37px;font-size:5.950px;line-height:7.74px;color:#5a5a5a;"><i>N/A</i>All -</div>
<div class="t" style="left:290.90px;top:380.17px;font-size:5.950px;line-height:7.74px;color:#5a5a5a;">Obituarie</div>
<div class="t" style="left:290.90px;top:388.97px;font-size:5.950px;line-height:7.74px;color:#5a5a5a;">s - Light a</div>
<div class="t" style="left:290.90px;top:397.77px;font-size:5.950px;line-height:7.74px;color:#5a5a5a;">candle!</div>
<div class="t" style="left:327.00px;top:371.37px;font-size:5.950px;line-height:7.74px;color:#5a5a5a;"><i>N/A</i></div>
<div class="t" style="left:363.30px;top:371.37px;font-size:5.950px;line-height:7.74px;color:#5a5a5a;"><i>N/A</i></div>
<div class="t" style="left:399.60px;top:371.37px;font-size:5.950px;line-height:7.74px;color:#5a5a5a;">John</div>
<div class="t" style="left:435.60px;top:371.37px;font-size:5.950px;line-height:7.74px;color:#5a5a5a;"><i>N/A</i></div>
<div class="t" style="left:471.90px;top:371.37px;font-size:5.950px;line-height:7.74px;color:#1f7db2;">Devotions</div>
<div class="t" style="left:507.90px;top:371.37px;font-size:5.950px;line-height:7.74px;color:#5a5a5a;">[candle</div>
<div class="t" style="left:507.90px;top:380.17px;font-size:5.950px;line-height:7.74px;color:#5a5a5a;">id="10764</div>
<div class="t" style="left:507.90px;top:388.97px;font-size:5.950px;line-height:7.74px;color:#5a5a5a;">"]</div>
<div class="t" style="left:544.30px;top:371.37px;font-size:5.950px;line-height:7.74px;color:#5a5a5a;"><span style="border-bottom:0.5px solid #9a9a9a">6 hours ago</span></div>
<div class="t" style="left:544.30px;top:380.17px;font-size:5.950px;line-height:7.74px;color:#5a5a5a;">Published</div>
<div class="r" style="left:87.00px;top:413.10px;width:6.20px;height:6.30px;background:#fbfbfb;border:0.7px solid #8c98a6;box-sizing:border-box;box-shadow:inset 0 0.5px 1px rgba(0,0,0,.08)"></div>
<div class="t" style="left:102.00px;top:412.97px;font-size:6.350px;line-height:8.25px;color:#2a85b9;font-weight:bold;">Maia</div>
<div class="t" style="left:226.90px;top:413.37px;font-size:5.950px;line-height:7.74px;color:#5a5a5a;">No<i>N/A</i></div>
<div class="t" style="left:262.60px;top:413.37px;font-size:5.950px;line-height:7.74px;color:#5a5a5a;"><i>N/A</i></div>
<svg class="r" style="left:274.90px;top:413.30px" width="5.5" height="5.5" viewBox="0 0 20 20"><circle cx="10" cy="10" r="10" fill="#8a8a8a"/></svg>
<div class="t" style="left:290.90px;top:413.37px;font-size:5.950px;line-height:7.74px;color:#5a5a5a;"><i>N/A</i>Maia -</div>
<div class="t" style="left:290.90px;top:422.17px;font-size:5.950px;line-height:7.74px;color:#5a5a5a;">Obituarie</div>
<div class="t" style="left:290.90px;top:430.97px;font-size:5.950px;line-height:7.74px;color:#5a5a5a;">s - Light a</div>
<div class="t" style="left:290.90px;top:439.77px;font-size:5.950px;line-height:7.74px;color:#5a5a5a;">candle!</div>
<div class="t" style="left:327.00px;top:413.37px;font-size:5.950px;line-height:7.74px;color:#5a5a5a;"><i>N/A</i></div>
<div class="t" style="left:363.30px;top:413.37px;font-size:5.950px;line-height:7.74px;color:#5a5a5a;"><i>N/A</i></div>
<div class="t" style="left:399.60px;top:413.37px;font-size:5.950px;line-height:7.74px;color:#5a5a5a;">Nina</div>
<div class="t" style="left:435.60px;top:413.37px;font-size:5.950px;line-height:7.74px;color:#5a5a5a;"><i>N/A</i></div>
<div class="t" style="left:471.90px;top:413.37px;font-size:5.950px;line-height:7.74px;color:#1f7db2;">Devotions</div>
<div class="t" style="left:507.90px;top:413.37px;font-size:5.950px;line-height:7.74px;color:#5a5a5a;">[candle</div>
<div class="t" style="left:507.90px;top:422.17px;font-size:5.950px;line-height:7.74px;color:#5a5a5a;">id="10765</div>
<div class="t" style="left:507.90px;top:430.97px;font-size:5.950px;line-height:7.74px;color:#5a5a5a;">"]</div>
<div class="t" style="left:544.30px;top:413.37px;font-size:5.950px;line-height:7.74px;color:#5a5a5a;"><span style="border-bottom:0.5px solid #9a9a9a">6 hours ago</span></div>
<div class="t" style="left:544.30px;top:422.17px;font-size:5.950px;line-height:7.74px;color:#5a5a5a;">Published</div>
<div class="r" style="left:87.00px;top:454.70px;width:6.20px;height:6.30px;background:#fbfbfb;border:0.7px solid #8c98a6;box-sizing:border-box;box-shadow:inset 0 0.5px 1px rgba(0,0,0,.08)"></div>
<div class="t" style="left:102.00px;top:454.57px;font-size:6.350px;line-height:8.25px;color:#2a85b9;font-weight:bold;">Animals</div>
<div class="t" style="left:226.90px;top:454.97px;font-size:5.950px;line-height:7.74px;color:#5a5a5a;">No<i>N/A</i></div>
<div class="t" style="left:262.60px;top:454.97px;font-size:5.950px;line-height:7.74px;color:#5a5a5a;"><i>N/A</i></div>
<svg class="r" style="left:274.90px;top:454.90px" width="5.5" height="5.5" viewBox="0 0 20 20"><circle cx="10" cy="10" r="10" fill="#8a8a8a"/></svg>
<div class="t" style="left:290.90px;top:454.97px;font-size:5.950px;line-height:7.74px;color:#5a5a5a;"><i>N/A</i>Anima</div>
<div class="t" style="left:290.90px;top:463.77px;font-size:5.950px;line-height:7.74px;color:#5a5a5a;">ls -</div>
<div class="t" style="left:290.90px;top:472.57px;font-size:5.950px;line-height:7.74px;color:#5a5a5a;">Obituarie</div>
<div class="t" style="left:290.90px;top:481.37px;font-size:5.950px;line-height:7.74px;color:#5a5a5a;">s - Light a</div>
<div class="t" style="left:290.90px;top:490.17px;font-size:5.950px;line-height:7.74px;color:#5a5a5a;">candle!</div>
<div class="t" style="left:327.00px;top:454.97px;font-size:5.950px;line-height:7.74px;color:#5a5a5a;"><i>N/A</i></div>
<div class="t" style="left:363.30px;top:454.97px;font-size:5.950px;line-height:7.74px;color:#5a5a5a;"><i>N/A</i></div>
<div class="t" style="left:399.60px;top:454.97px;font-size:5.950px;line-height:7.74px;color:#5a5a5a;">Malandra</div>
<div class="t" style="left:435.60px;top:454.97px;font-size:5.950px;line-height:7.74px;color:#5a5a5a;"><i>N/A</i></div>
<div class="t" style="left:471.90px;top:454.97px;font-size:5.950px;line-height:7.74px;color:#1f7db2;">Devotions</div>
<div class="t" style="left:507.90px;top:454.97px;font-size:5.950px;line-height:7.74px;color:#5a5a5a;">[candle</div>
<div class="t" style="left:507.90px;top:463.77px;font-size:5.950px;line-height:7.74px;color:#5a5a5a;">id="10766</div>
<div class="t" style="left:507.90px;top:472.57px;font-size:5.950px;line-height:7.74px;color:#5a5a5a;">"]</div>
<div class="t" style="left:544.30px;top:454.97px;font-size:5.950px;line-height:7.74px;color:#5a5a5a;"><span style="border-bottom:0.5px solid #9a9a9a">6 hours ago</span></div>
<div class="t" style="left:544.30px;top:463.77px;font-size:5.950px;line-height:7.74px;color:#5a5a5a;">Published</div>
<div class="r" style="left:82.00px;top:530.80px;width:55.20px;height:12.40px;background:#fff;border:0.5px solid #e0e0e0;box-sizing:border-box;box-shadow:0 0.5px 0.5px rgba(0,0,0,.05)"></div>
<div class="r" style="left:130.70px;top:531.30px;width:6.20px;height:11.40px;background:#c3d4f3;"></div>
<svg class="r" style="left:132.20px;top:535.80px" width="3.6" height="2.6" viewBox="0 0 4 3"><path d="M0.6 0.5 L2 1.9 L3.4 0.5" stroke="#2f3d58" stroke-width="1.1" fill="none"/></svg>
<div class="t" style="left:85.00px;top:533.22px;font-size:6.500px;line-height:8.45px;color:#444;">Bulk Actions</div>
<div class="r" style="left:141.00px;top:530.80px;width:24.60px;height:12.40px;background:#f7f7f7;border:0.5px solid #d2d2d2;box-sizing:border-box;border-radius:1.3px;box-shadow:0 0.5px 0 rgba(0,0,0,.05)"></div>
<div class="t" style="left:93.30px;width:120px;text-align:center;top:533.62px;font-size:6.000px;line-height:7.8px;color:#555;">Apply</div>
<div class="t" style="left:573.00px;top:533.12px;font-size:5.500px;line-height:7.15px;color:#777;font-style:italic;">8 items</div>
<div class="t" style="left:80.40px;top:570.39px;font-size:5.632px;line-height:7.32px;color:#777;font-style:italic;">Thank you for creating with <span style="color:#0073aa">WordPress</span>.</div>
<div class="t" style="left:558.00px;top:570.37px;font-size:5.653px;line-height:7.35px;color:#777;">Version 4.2.2</div>
</div></body></html>
